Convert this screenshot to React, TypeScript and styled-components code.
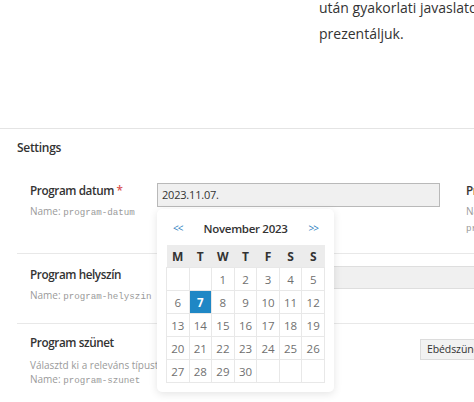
import React from "react";
import styled, { createGlobalStyle } from "styled-components";

const Global = createGlobalStyle`
  html, body { margin: 0; padding: 0; background: #fff; overflow: hidden; }
  body { width: 474px; height: 402px; font-family: "Open Sans", "Noto Sans", sans-serif; color: #333; }
`;

const Page = styled.div`
  width: 600px;
`;

const Intro = styled.div`
  height: 128px;
  padding-left: 319px;
  overflow: hidden;
  box-sizing: border-box;
`;

const IntroText = styled.p`
  margin: -5px 0 0 0;
  font-size: 14px;
  line-height: 26px;
  color: #333;
  white-space: nowrap;
`;

const Panel = styled.section`
  border-top: 1px solid #e4e4e4;
`;

const PanelTitle = styled.h3`
  margin: 0;
  padding: 10px 17px;
  font-size: 12px;
  line-height: 18px;
  font-weight: 600;
  letter-spacing: -0.3px;
  color: #333;
`;

const PanelBody = styled.div`
  padding-left: 17px;
`;

const Row = styled.div<{ $pad: number; $h: number }>`
  display: grid;
  grid-template-columns: 127px 1fr;
  padding: ${(p) => p.$pad}px 0 0 13px;
  height: ${(p) => p.$h}px;
  box-sizing: border-box;
  border-bottom: 1px solid #e8e8e8;
`;

const WideRow = styled.div`
  display: flex;
  align-items: flex-start;
  padding: 8px 0 0 13px;
  height: 70px;
  box-sizing: border-box;
`;

const Info = styled.div<{ $w?: number }>`
  display: flex;
  flex-direction: column;
  ${(p) => (p.$w ? `width: ${p.$w}px; flex: none;` : "")}
`;

const Label = styled.div`
  font-size: 11.7px;
  line-height: 20px;
  font-weight: 600;
  letter-spacing: -0.4px;
  color: #333;
  white-space: nowrap;
`;

const Req = styled.span`
  color: #d9534f;
`;

const Hint = styled.div<{ $mt: number; $wrap?: boolean }>`
  margin-top: ${(p) => p.$mt}px;
  font-size: 10px;
  line-height: 16px;
  color: #9a9a9a;
  white-space: ${(p) => (p.$wrap ? "normal" : "nowrap")};
`;

const Desc = styled.div<{ $mt: number }>`
  margin-top: ${(p) => p.$mt}px;
  font-size: 10px;
  line-height: 14px;
  color: #9a9a9a;
  white-space: nowrap;
`;

const Mono = styled.span`
  font-family: "Liberation Mono", "DejaVu Sans Mono", monospace;
  font-size: 9.2px;
  white-space: nowrap;
`;

const Controls = styled.div`
  display: flex;
  align-items: flex-start;
  gap: 26px;
`;

const DateWrap = styled.div`
  position: relative;
  width: 283px;
  margin-top: 3px;
`;

const DateInput = styled.div`
  height: 24px;
  box-sizing: border-box;
  border: 1px solid #b9b9b9;
  background: #f0f0f0;
  font-size: 11px;
  line-height: 22px;
  padding-left: 4px;
  letter-spacing: -0.2px;
  color: #333;
`;

const TextInput = styled.div`
  margin-top: 2px;
  height: 23px;
  box-sizing: border-box;
  border: 1px solid #dedede;
  background: #f0f0f0;
`;

const SelectBox = styled.div`
  margin: 7px 0 0 10px;
  width: 180px;
  height: 21px;
  box-sizing: border-box;
  border: 1px solid #dcdcdc;
  background: #f2f2f2;
  font-size: 10.5px;
  line-height: 19px;
  padding-left: 6px;
  letter-spacing: -0.1px;
  color: #333;
`;

const Popup = styled.div`
  position: absolute;
  left: 0;
  top: 26px;
  width: 177px;
  box-sizing: border-box;
  padding: 10px 9px 9px;
  background: #fff;
  border-radius: 5px;
  box-shadow: 0 2px 8px rgba(0, 0, 0, 0.11);
  z-index: 10;
`;

const CalHead = styled.div`
  display: flex;
  align-items: center;
  justify-content: space-between;
  padding: 0 7px;
  height: 18px;
  margin-bottom: 8px;
`;

const Nav = styled.span`
  color: #2f7fc1;
  font-size: 10px;
  letter-spacing: -1px;
  cursor: pointer;
`;

const Month = styled.span`
  font-size: 11.5px;
  font-weight: 600;
  letter-spacing: -0.3px;
  color: #333;
`;

const Table = styled.table`
  width: 159px;
  table-layout: fixed;
  border-collapse: collapse;
`;

const Th = styled.th`
  height: 22px;
  padding: 0;
  background: #ececec;
  font-size: 12px;
  font-weight: 700;
  color: #333;
  text-align: center;
`;

const Td = styled.td<{ $sel?: boolean }>`
  height: 22px;
  padding: 0;
  border: 1px solid #e8e8e8;
  text-align: center;
  font-size: 11.5px;
  color: ${(p) => (p.$sel ? "#fff" : "#707070")};
  font-weight: ${(p) => (p.$sel ? 700 : 400)};
  background: ${(p) => (p.$sel ? "#1f87c5" : "#fff")};
`;

const days = ["M", "T", "W", "T", "F", "S", "S"];
const weeks: (number | null)[][] = [
  [null, null, 1, 2, 3, 4, 5],
  [6, 7, 8, 9, 10, 11, 12],
  [13, 14, 15, 16, 17, 18, 19],
  [20, 21, 22, 23, 24, 25, 26],
  [27, 28, 29, 30, null, null, null],
];

export default function App() {
  return (
    <Page>
      <Global />
      <Intro>
        <IntroText>
          után gyakorlati javaslatokat
          <br />
          prezentáljuk.
        </IntroText>
      </Intro>
      <Panel>
        <PanelTitle>Settings</PanelTitle>
        <PanelBody>
          <Row $pad={13} $h={87}>
            <Info>
              <Label>
                Program datum <Req>*</Req>
              </Label>
              <Hint $mt={3}>
                Name: <Mono>program-datum</Mono>
              </Hint>
            </Info>
            <Controls>
              <DateWrap>
                <DateInput>2023.11.07.</DateInput>
                <Popup>
                  <CalHead>
                    <Nav>&lt;&lt;</Nav>
                    <Month>November 2023</Month>
                    <Nav>&gt;&gt;</Nav>
                  </CalHead>
                  <Table>
                    <thead>
                      <tr>
                        {days.map((d, i) => (
                          <Th key={i}>{d}</Th>
                        ))}
                      </tr>
                    </thead>
                    <tbody>
                      {weeks.map((w, i) => (
                        <tr key={i}>
                          {w.map((d, j) => (
                            <Td key={j} $sel={d === 7}>
                              {d ?? ""}
                            </Td>
                          ))}
                        </tr>
                      ))}
                    </tbody>
                  </Table>
                </Popup>
              </DateWrap>
              <Info $w={60}>
                <Label>Program idő</Label>
                <Hint $mt={3} $wrap>
                  Name: <Mono>program-ido</Mono>
                </Hint>
              </Info>
            </Controls>
          </Row>
          <Row $pad={10} $h={70}>
            <Info>
              <Label>Program helyszín</Label>
              <Hint $mt={3}>
                Name: <Mono>program-helyszin</Mono>
              </Hint>
            </Info>
            <TextInput />
          </Row>
          <WideRow>
            <Info $w={380}>
              <Label>Program szünet</Label>
              <Desc $mt={6}>Választd ki a releváns típust, ha a programban szünet is van.</Desc>
              <Desc $mt={0}>
                Name: <Mono>program-szunet</Mono>
              </Desc>
            </Info>
            <SelectBox>Ebédszünet</SelectBox>
          </WideRow>
        </PanelBody>
      </Panel>
    </Page>
  );
}
